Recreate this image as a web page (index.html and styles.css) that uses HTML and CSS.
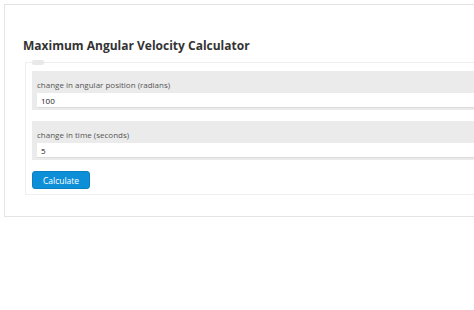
FILE: index.html
```html
<!DOCTYPE html>
<html>
<head>
<meta charset="utf-8">
<link rel="stylesheet" href="styles.css">
</head>
<body>
<div class="viewport">
<div class="page">
  <h2 class="title">Maximum Angular Velocity Calculator</h2>
  <div class="form">
    <div class="legend"></div>
    <div class="field">
      <label class="label">change in angular position (radians)</label>
      <input class="input" type="text" value="100">
    </div>
    <div class="field">
      <label class="label">change in time (seconds)</label>
      <input class="input" type="text" value="5">
    </div>
    <button class="btn">Calculate</button>
  </div>
</div>
</div>
</body>
</html>
```
FILE: styles.css
```css
html, body {
  margin: 0;
  padding: 0;
  background: #fff;
}
body {
  font-family: "Open Sans", "Noto Sans", sans-serif;
  color: #333;
}
.viewport {
  width: 474px;
  height: 310px;
  overflow: hidden;
}
.page {
  margin: 4px 0 0 4px;
  width: 520px;
  height: 213px;
  border: 1px solid #e4e4e4;
  box-sizing: border-box;
  padding: 33px 0 0 18px;
}
.title {
  margin: 0;
  font-size: 12px;
  font-weight: 700;
  line-height: 16px;
  color: #333;
}
.form {
  position: relative;
  margin-top: 8px;
  margin-left: 2px;
  border: 1px solid #efefef;
  padding: 8px 0 5px 6px;
  display: flex;
  flex-direction: column;
  align-items: flex-start;
}
.legend {
  position: absolute;
  left: 6px;
  top: -3px;
  width: 12px;
  height: 5px;
  background: #e9e9e9;
  border-radius: 2px;
}
.field {
  align-self: stretch;
  box-sizing: border-box;
  height: 39px;
  background: #ebebeb;
  padding: 8px 0 0 5px;
  margin-bottom: 11px;
  display: flex;
  flex-direction: column;
}
.label {
  font-size: 8px;
  line-height: 11px;
  height: 11px;
  color: #555;
  margin-bottom: 3px;
}
.input {
  font-family: "Open Sans", "Noto Sans", sans-serif;
  font-size: 8px;
  color: #222;
  border: none;
  border-bottom: 1px solid #dcdcdc;
  height: 15px;
  padding: 0 4px;
  margin: 0;
  background: #fff;
  box-sizing: border-box;
  outline: none;
}
.btn {
  font-family: "Open Sans", "Noto Sans", sans-serif;
  font-size: 8.5px;
  color: #fff;
  background: #0d8fd8;
  border: 1px solid #0a80c4;
  border-radius: 3px;
  width: 58px;
  height: 18px;
  padding: 0;
}
```
